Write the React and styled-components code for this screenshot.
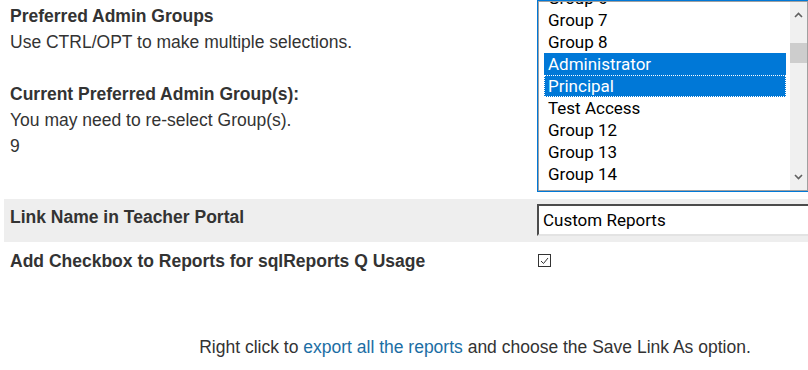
import React, { useEffect, useRef } from 'react';
import styled, { createGlobalStyle } from 'styled-components';

const GlobalStyle = createGlobalStyle`
    html, body {
        margin: 0;
        padding: 0;
        background: #ffffff;
        overflow: hidden;
    }
    body {
        font-family: "Liberation Sans", Arial, sans-serif;
        font-size: 17.5px;
        color: #333333;
    }
`;

const Page = styled.div`
    width: 942px;
    padding-left: 4px;
`;

const Row = styled.div`
    display: grid;
    grid-template-columns: 533px 1fr;
    height: ${props => props.height}px;
    margin-bottom: ${props => props.gap || 0}px;
    background: ${props => props.shaded ? '#eeeeee' : 'transparent'};
`;

const Label = styled.div`
    padding: ${props => props.top}px 6px 0 6px;
    line-height: 26px;
    white-space: nowrap;
`;

const Strong = styled.div`
    font-weight: bold;
`;

const Field = styled.div`
    padding-top: ${props => props.top || 0}px;
`;

const ListBox = styled.div`
    display: flex;
    width: 270px;
    height: 190px;
    border: 1px solid #0078d7;
    box-sizing: content-box;
`;

const ListInner = styled.div`
    flex: 1;
    display: flex;
    border: 1px solid #a0a0a0;
    background: #ffffff;
    min-width: 0;
`;

const Options = styled.div`
    flex: 1;
    overflow: hidden;
    padding-left: 5px;
    padding-right: 4px;
`;

const Option = styled.div`
    height: 22px;
    line-height: 22px;
    padding-left: 4px;
    font-family: Roboto, "Noto Sans", sans-serif;
    font-size: 17px;
    color: ${props => props.selected ? '#ffffff' : '#000000'};
    background: ${props => props.selected ? '#0078d7' : 'transparent'};
    outline: ${props => props.focused ? '1px dotted #ffffff' : 'none'};
    outline-offset: -1px;
    white-space: nowrap;
`;

const Scrollbar = styled.div`
    width: 17px;
    display: flex;
    flex-direction: column;
    background: #f0f0f0;
`;

const Arrow = styled.div`
    height: 26px;
    display: flex;
    align-items: center;
    justify-content: center;
`;

const Track = styled.div`
    flex: 1;
`;

const Thumb = styled.div`
    margin-top: 15px;
    height: 20px;
    background: #cdcdcd;
`;

const TextInput = styled.input`
    width: 300px;
    height: 32px;
    box-sizing: border-box;
    border: 2px inset #a0a0a0;
    border-right-color: #e3e3e3;
    border-bottom-color: #e3e3e3;
    padding: 0 4px;
    font-family: Roboto, "Noto Sans", sans-serif;
    font-size: 17px;
    color: #000000;
    background: #ffffff;
    outline: none;
`;

const CheckBox = styled.span`
    display: inline-flex;
    align-items: center;
    justify-content: center;
    width: 13px;
    height: 13px;
    box-sizing: border-box;
    border: 1px solid #333333;
    background: #ffffff;
    margin-left: 1px;
    vertical-align: top;
`;

const Footer = styled.div`
    margin-top: 54px;
    text-align: center;
    line-height: 26px;
    color: #333333;
    white-space: nowrap;
`;

const Link = styled.a`
    color: #1c6ea4;
    text-decoration: none;
`;

const groups = [
    'Group 1', 'Group 2', 'Group 3', 'Group 4', 'Group 5', 'Group 6',
    'Group 7', 'Group 8', 'Administrator', 'Principal', 'Test Access',
    'Group 12', 'Group 13', 'Group 14', 'Group 15', 'Group 16'
];

const selected = ['Administrator', 'Principal'];

function Chevron({ up }) {
    return (
        <svg width="9" height="6" viewBox="0 0 9 6">
            <path
                d={up ? 'M1 5 L4.5 1.5 L8 5' : 'M1 1 L4.5 4.5 L8 1'}
                fill="none"
                stroke="#606060"
                strokeWidth="1.6"
            />
        </svg>
    );
}

function GroupList() {
    const listRef = useRef(null);

    useEffect(() => {
        if (listRef.current)
            listRef.current.scrollTop = 15 + 22 * 5;
    }, []);

    return (
        <ListBox>
            <ListInner>
                <Options ref={listRef}>
                    {groups.map(name => (
                        <Option
                            key={name}
                            selected={selected.includes(name)}
                            focused={name === 'Principal'}
                        >
                            {name}
                        </Option>
                    ))}
                </Options>
                <Scrollbar>
                    <Arrow><Chevron up /></Arrow>
                    <Track><Thumb /></Track>
                    <Arrow><Chevron /></Arrow>
                </Scrollbar>
            </ListInner>
        </ListBox>
    );
}

function App() {
    return (
        <Page>
            <GlobalStyle />

            <Row height={196} gap={3}>
                <Label top={3}>
                    <Strong>Preferred Admin Groups</Strong>
                    <div>Use CTRL/OPT to make multiple selections.</div>
                    <br />
                    <Strong>Current Preferred Admin Group(s):</Strong>
                    <div>You may need to re-select Group(s).</div>
                    <div>9</div>
                </Label>
                <Field>
                    <GroupList />
                </Field>
            </Row>

            <Row height={43} shaded>
                <Label top={5}>
                    <Strong>Link Name in Teacher Portal</Strong>
                </Label>
                <Field top={5}>
                    <TextInput defaultValue="Custom Reports" />
                </Field>
            </Row>

            <Row height={38}>
                <Label top={6}>
                    <Strong>Add Checkbox to Reports for sqlReports Q Usage</Strong>
                </Label>
                <Field top={12}>
                    <CheckBox>
                        <svg width="9" height="8" viewBox="0 0 9 8">
                            <path d="M1 4 L3.5 6.5 L8 1" fill="none" stroke="#333333" strokeWidth="1" />
                        </svg>
                    </CheckBox>
                </Field>
            </Row>

            <Footer>
                Right click to <Link href="#">export all the reports</Link> and choose the Save Link As option.
            </Footer>
        </Page>
    );
}

export default App;
